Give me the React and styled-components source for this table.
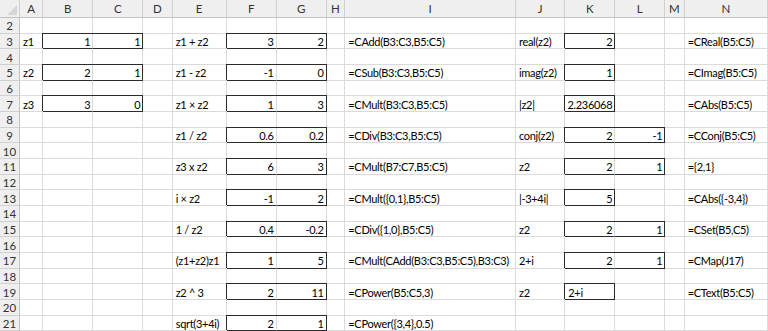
import React from "react";
import styled, { createGlobalStyle } from "styled-components";

const GlobalStyle = createGlobalStyle`
  html, body {
    margin: 0;
    padding: 0;
    background: #ffffff;
    overflow: hidden;
  }
`;

// column letter + width in px
const COLUMNS = [
  ["A", 23.3],
  ["B", 50],
  ["C", 50],
  ["D", 29.4],
  ["E", 54],
  ["F", 50],
  ["G", 50],
  ["H", 18.6],
  ["I", 170.7],
  ["J", 49.3],
  ["K", 50],
  ["L", 50],
  ["M", 19.4],
  ["N", null],
];

const FIRST_ROW = 2;
const LAST_ROW = 21;

// cell contents: strings are labels (left), numbers are values (right)
const DATA = {
  3: { A: "z1", B: 1, C: 1, E: "z1 + z2", F: 3, G: 2, I: "=CAdd(B3:C3,B5:C5)", J: "real(z2)", K: 2, N: "=CReal(B5:C5)" },
  5: { A: "z2", B: 2, C: 1, E: "z1 - z2", F: -1, G: 0, I: "=CSub(B3:C3,B5:C5)", J: "imag(z2)", K: 1, N: "=CImag(B5:C5)" },
  7: { A: "z3", B: 3, C: 0, E: "z1 \u00d7 z2", F: 1, G: 3, I: "=CMult(B3:C3,B5:C5)", J: "|z2|", K: 2.236068, N: "=CAbs(B5:C5)" },
  9: { E: "z1 / z2", F: 0.6, G: 0.2, I: "=CDiv(B3:C3,B5:C5)", J: "conj(z2)", K: 2, L: -1, N: "=CConj(B5:C5)" },
  11: { E: "z3 x z2", F: 6, G: 3, I: "=CMult(B7:C7,B5:C5)", J: "z2", K: 2, L: 1, N: "={2,1}" },
  13: { E: "i \u00d7 z2", F: -1, G: 2, I: "=CMult({0,1},B5:C5)", J: "|-3+4i|", K: 5, N: "=CAbs({-3,4})" },
  15: { E: "1 / z2", F: 0.4, G: -0.2, I: "=CDiv({1,0},B5:C5)", J: "z2", K: 2, L: 1, N: "=CSet(B5,C5)" },
  17: { E: "(z1+z2)z1", F: 1, G: 5, I: "=CMult(CAdd(B3:C3,B5:C5),B3:C3)", J: "2+i", K: 2, L: 1, N: "=CMap(J17)" },
  19: { E: "z2 ^ 3", F: 2, G: 11, I: "=CPower(B5:C5,3)", J: "z2", K: "2+i", N: "=CText(B5:C5)" },
  21: { E: "sqrt(3+4i)", F: 2, G: 1, I: "=CPower({3,4},0.5)" },
};

// outlined ranges per row
const BOXES = {
  3: [["B", "C"], ["F", "G"], ["K", "K"]],
  5: [["B", "C"], ["F", "G"], ["K", "K"]],
  7: [["B", "C"], ["F", "G"], ["K", "K"]],
  9: [["F", "G"], ["K", "L"]],
  11: [["F", "G"], ["K", "L"]],
  13: [["F", "G"], ["K", "K"]],
  15: [["F", "G"], ["K", "L"]],
  17: [["F", "G"], ["K", "L"]],
  19: [["F", "G"], ["K", "K"]],
  21: [["F", "G"]],
};

const GRID = "#dadada";
const HEAD_BG = "#efefef";
const HEAD_LINE = "#d0d0d0";
const BOX = "#2b2b2b";

const Sheet = styled.div`
  display: grid;
  grid-template-columns: 20px ${COLUMNS.map(([, w]) => (w ? `${w}px` : "1fr")).join(" ")};
  grid-template-rows: 18px;
  grid-auto-rows: 15.684px;
  width: 768px;
  height: 331px;
  overflow: hidden;
  font-family: Lato, "Liberation Sans", sans-serif;
  font-size: 11px;
  letter-spacing: -0.3px;
  color: #000;
`;

const Corner = styled.div`
  background: ${HEAD_BG};
  border-right: 1px solid ${HEAD_LINE};
  border-bottom: 1px solid #c2c2c2;
  box-sizing: border-box;
  display: flex;
  align-items: flex-end;
  justify-content: flex-end;
  padding: 0 2px 2px 0;
`;

const ColHead = styled.div`
  background: ${HEAD_BG};
  border-right: 1px solid ${HEAD_LINE};
  border-bottom: 1px solid #c2c2c2;
  box-sizing: border-box;
  display: flex;
  align-items: center;
  justify-content: center;
  color: #333;
  font-size: 11.5px;
  letter-spacing: 0;
`;

const RowHead = styled.div`
  background: ${HEAD_BG};
  border-right: 1px solid #c2c2c2;
  border-bottom: 1px solid ${HEAD_LINE};
  box-sizing: border-box;
  display: flex;
  align-items: center;
  justify-content: center;
  color: #333;
  font-size: 11.5px;
  letter-spacing: 0;
  padding-top: 1px;
`;

const Cell = styled.div`
  box-sizing: border-box;
  border-right: 1px solid ${(p) => (p.$right ? BOX : GRID)};
  border-bottom: 1px solid ${(p) => (p.$boxed ? BOX : GRID)};
  box-shadow: ${(p) =>
    !p.$boxed ? "none" : p.$left ? `0 -1px 0 ${BOX}, -1px -1px 0 ${BOX}` : `0 -1px 0 ${BOX}`};
  display: flex;
  align-items: center;
  justify-content: ${(p) => (p.$num ? "flex-end" : "flex-start")};
  padding: 1px 2px 0 3px;
  white-space: nowrap;
  overflow: visible;
  min-width: 0;
`;

function boxInfo(row, col) {
  const ranges = BOXES[row] || [];
  const idx = COLUMNS.findIndex(([c]) => c === col);
  for (const [a, b] of ranges) {
    const ia = COLUMNS.findIndex(([c]) => c === a);
    const ib = COLUMNS.findIndex(([c]) => c === b);
    if (idx >= ia && idx <= ib) {
      return { boxed: true, left: idx === ia, right: idx === ib };
    }
  }
  return { boxed: false, left: false, right: false };
}

function CornerMark() {
  return (
    <svg width="10" height="10" viewBox="0 0 10 10">
      <polygon points="10,0 10,10 0,10" fill="#d6d6d6" />
    </svg>
  );
}

export default function App() {
  const rows = [];
  for (let r = FIRST_ROW; r <= LAST_ROW; r++) rows.push(r);

  return (
    <>
      <GlobalStyle />
      <Sheet>
        <Corner>
          <CornerMark />
        </Corner>
        {COLUMNS.map(([c]) => (
          <ColHead key={c}>{c}</ColHead>
        ))}
        {rows.map((r) => (
          <React.Fragment key={r}>
            <RowHead>{r}</RowHead>
            {COLUMNS.map(([c]) => {
              const v = (DATA[r] || {})[c];
              const b = boxInfo(r, c);
              return (
                <Cell
                  key={c}
                  $num={typeof v === "number"}
                  $boxed={b.boxed}
                  $left={b.left}
                  $right={b.right}
                >
                  {v}
                </Cell>
              );
            })}
          </React.Fragment>
        ))}
      </Sheet>
    </>
  );
}
